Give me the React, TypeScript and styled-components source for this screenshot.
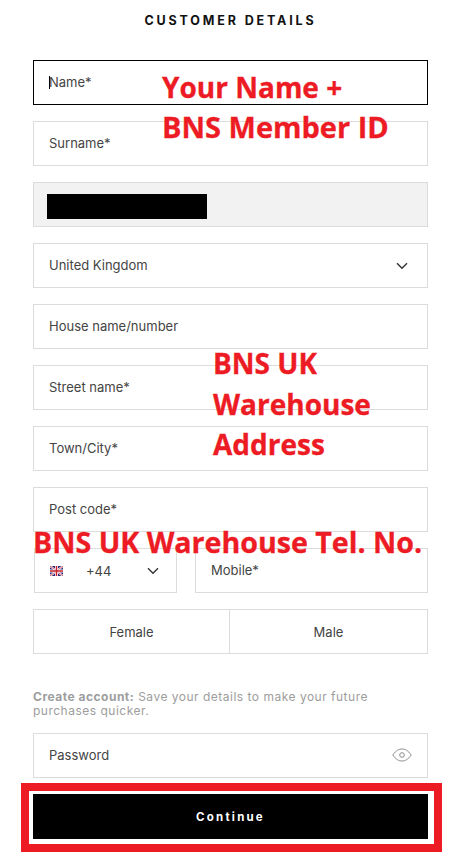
import styled, { createGlobalStyle } from 'styled-components';

const GlobalStyle = createGlobalStyle`
  html, body {
    margin: 0;
    padding: 0;
    background: #fff;
  }
  * {
    box-sizing: border-box;
  }
`;

const Page = styled.div`
  position: relative;
  width: 472px;
  height: 863px;
  overflow: hidden;
  padding: 0 44px 0 33px;
  font-family: Inter, "Liberation Sans", sans-serif;
  color: #444;
`;

const Title = styled.h1`
  margin: 0;
  height: 60px;
  padding-top: 13px;
  font-size: 12.5px;
  line-height: 15px;
  font-weight: 700;
  letter-spacing: 2.85px;
  text-align: center;
  color: #111;
`;

const Form = styled.div`
  display: flex;
  flex-direction: column;
  gap: 16px;
`;

const Field = styled.div<{ $focused?: boolean; $locked?: boolean }>`
  display: flex;
  align-items: center;
  justify-content: space-between;
  height: 45px;
  padding: 0 15px 2px;
  font-size: 13px;
  background: ${p => (p.$locked ? '#f2f2f2' : '#fff')};
  border: 1px solid ${p => (p.$focused ? '#000' : '#dcdcdc')};
`;

const Caret = styled.span`
  display: inline-block;
  width: 1px;
  height: 13px;
  margin-right: -1px;
  background: #000;
  vertical-align: -2px;
`;

const Redaction = styled.div`
  width: 160px;
  height: 25px;
  margin: 6px 0 0 -2px;
  background: #000;
`;

const PhoneRow = styled.div`
  display: grid;
  grid-template-columns: 143px 233px;
  justify-content: space-between;
  padding-left: 1px;
`;

const CodeSelect = styled(Field)`
  padding: 0 17px 0 15px;
`;

const Dial = styled.span`
  flex: 1;
  padding-left: 23px;
`;

const GenderRow = styled.div`
  display: flex;
  height: 45px;
  border: 1px solid #dcdcdc;
`;

const GenderOption = styled.div<{ $grow: number }>`
  display: flex;
  align-items: center;
  justify-content: center;
  flex: ${p => p.$grow} 0 0;
  font-size: 13px;
  & + & {
    border-left: 1px solid #dcdcdc;
  }
`;

const Hint = styled.p`
  margin: 0;
  height: 79px;
  padding-top: 36px;
  width: 372px;
  font-size: 12px;
  line-height: 14px;
  letter-spacing: 0.5px;
  color: #9d9d9d;
  strong {
    font-weight: 700;
  }
`;

const ChevronBox = styled.svg<{ $inset?: number; $drop?: number }>`
  margin: ${p => p.$drop ?? 0}px ${p => p.$inset ?? 0}px 0 0;
  flex: none;
`;

const EyeBox = styled.svg`
  margin-top: 1px;
  flex: none;
`;

const ContinueWrap = styled.div`
  position: relative;
  margin-top: 16px;
`;

const ContinueButton = styled.button`
  display: block;
  width: 100%;
  height: 45px;
  border: 0;
  background: #000;
  color: #fff;
  font-family: inherit;
  font-size: 11.5px;
  font-weight: 700;
  letter-spacing: 2.2px;
`;

const RedFrame = styled.div`
  position: absolute;
  top: -11px;
  left: -12px;
  right: -14px;
  bottom: -13px;
  border: 8px solid #ed1c24;
  pointer-events: none;
`;

const Note = styled.div<{ $x: number; $y: number; $size?: number }>`
  position: absolute;
  left: ${p => p.$x}px;
  top: ${p => p.$y}px;
  font-family: "Open Sans", "Noto Sans", sans-serif;
  font-weight: 700;
  font-size: ${p => p.$size ?? 28}px;
  line-height: 40px;
  white-space: nowrap;
  color: #ed1c24;
  -webkit-text-stroke: 0.3px #ed1c24;
`;

function Chevron({ inset, drop }: { inset?: number; drop?: number }) {
  return (
    <ChevronBox $inset={inset} $drop={drop} width="12" height="8" viewBox="0 0 12 8" fill="none">
      <path d="M1 1.2 L6 6.2 L11 1.2" stroke="#333" strokeWidth="1.4" />
    </ChevronBox>
  );
}

function Flag() {
  return (
    <svg width="13" height="10" viewBox="0 0 26 20">
      <rect width="26" height="20" fill="#2b2a7c" />
      <path d="M0 0 L26 20 M26 0 L0 20" stroke="#fff" strokeWidth="4" />
      <path d="M0 0 L26 20 M26 0 L0 20" stroke="#c8202f" strokeWidth="1.5" />
      <path d="M13 0 V20 M0 10 H26" stroke="#fff" strokeWidth="6" />
      <path d="M13 0 V20 M0 10 H26" stroke="#c8202f" strokeWidth="3" />
    </svg>
  );
}

function Eye() {
  return (
    <EyeBox width="20" height="14" viewBox="0 0 20 14" fill="none" stroke="#8c8c8c" strokeWidth="1">
      <path d="M0.8 7 C4 2.4 7 1 10 1 C13 1 16 2.4 19.2 7 C16 11.6 13 13 10 13 C7 13 4 11.6 0.8 7 Z" />
      <circle cx="10" cy="7" r="2.3" />
    </EyeBox>
  );
}

export default function App() {
  return (
    <Page>
      <GlobalStyle />
      <Title>CUSTOMER DETAILS</Title>
      <Form>
        <Field $focused><span><Caret />Name*</span></Field>
        <Field>Surname*</Field>
        <Field $locked><Redaction /></Field>
        <Field>United Kingdom<Chevron inset={4} drop={2} /></Field>
        <Field>House name/number</Field>
        <Field>Street name*</Field>
        <Field>Town/City*</Field>
        <Field>Post code*</Field>
        <PhoneRow>
          <CodeSelect><Flag /><Dial>+44</Dial><Chevron /></CodeSelect>
          <Field>Mobile*</Field>
        </PhoneRow>
        <GenderRow>
          <GenderOption $grow={196}>Female</GenderOption>
          <GenderOption $grow={198}>Male</GenderOption>
        </GenderRow>
      </Form>
      <Hint><strong>Create account:</strong> Save your details to make your future purchases quicker.</Hint>
      <Form>
        <Field>Password<Eye /></Field>
      </Form>
      <ContinueWrap>
        <ContinueButton>Continue</ContinueButton>
        <RedFrame />
      </ContinueWrap>
      <Note $x={162} $y={67}>Your Name +</Note>
      <Note $x={162} $y={107} $size={29}>BNS Member ID</Note>
      <Note $x={213} $y={343}>BNS UK</Note>
      <Note $x={213} $y={384}>Warehouse</Note>
      <Note $x={213} $y={424}>Address</Note>
      <Note $x={33} $y={522} $size={28.6}>BNS UK Warehouse Tel. No.</Note>
    </Page>
  );
}
